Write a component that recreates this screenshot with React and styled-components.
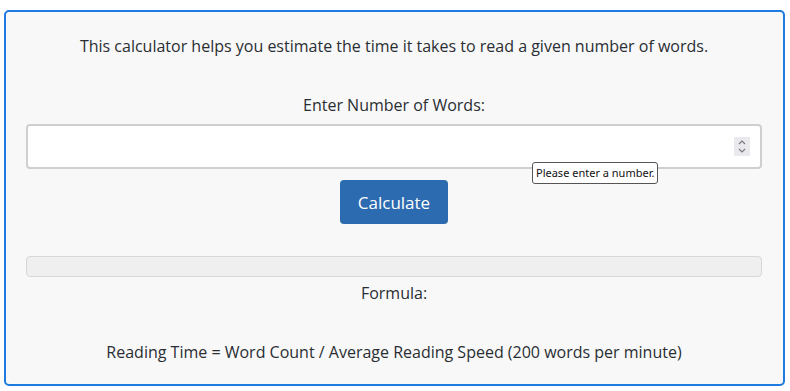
import React from "react";
import styled, { createGlobalStyle } from "styled-components";

const Global = createGlobalStyle`
  html, body { margin: 0; padding: 0; background: #ffffff; }
  body { font-family: "Open Sans", "Noto Sans", sans-serif; color: #212529; }
  * { box-sizing: border-box; }
`;

const Card = styled.div`
  margin: 10px 5px 0 4px;
  height: 376px;
  border: 2px solid #1e7be0;
  border-radius: 5px;
  background: #f8f8f8;
  padding: 22px 21px 0 20px;
  display: flex;
  flex-direction: column;
`;

const Text = styled.p`
  margin: ${(p) => p.$mt || 0}px 0 0;
  font-size: 16px;
  line-height: 24px;
  text-align: center;
  color: #2a2e33;
`;

const InputWrap = styled.div`
  position: relative;
  margin-top: 7px;
`;

const Field = styled.div`
  height: 45px;
  background: #ffffff;
  border: 2px solid #cfcfcf;
  border-radius: 4px;
  display: flex;
  align-items: center;
  justify-content: flex-end;
  padding-right: 10px;
`;

const Spinner = styled.div`
  width: 16px;
  height: 19px;
  background: #e9e9ee;
  display: flex;
  align-items: center;
  justify-content: center;
`;

const Tooltip = styled.div`
  position: absolute;
  left: 506px;
  top: 38px;
  padding: 1px 3px;
  background: #ffffff;
  border: 1px solid #555;
  border-radius: 3px;
  font-family: "Noto Sans", "Open Sans", sans-serif;
  font-size: 11px;
  line-height: 18px;
  color: #111;
  white-space: nowrap;
`;

const Button = styled.button`
  align-self: center;
  margin-top: 11px;
  width: 108px;
  height: 44px;
  border: none;
  border-radius: 4px;
  background: #2c6bb0;
  color: #ffffff;
  font-family: "Open Sans", sans-serif;
  font-size: 17px;
  cursor: pointer;
`;

const Bar = styled.div`
  margin-top: 32px;
  height: 21px;
  background: #efefef;
  border: 1px solid #d8d8d8;
  border-radius: 4px;
`;

export default function App() {
  return (
    <>
      <Global />
      <Card>
        <Text>This calculator helps you estimate the time it takes to read a given number of words.</Text>
        <Text $mt={35}>Enter Number of Words:</Text>
        <InputWrap>
          <Field>
            <Spinner>
              <svg width="10" height="15" viewBox="0 0 10 15" fill="none" stroke="#777" strokeWidth="1.1">
                <path d="M2 5 L5 2 L8 5" />
                <path d="M2 10 L5 13 L8 10" />
              </svg>
            </Spinner>
          </Field>
          <Tooltip>Please enter a number.</Tooltip>
        </InputWrap>
        <Button>Calculate</Button>
        <Bar />
        <Text $mt={4}>Formula:</Text>
        <Text $mt={35}>Reading Time = Word Count / Average Reading Speed (200 words per minute)</Text>
      </Card>
    </>
  );
}
